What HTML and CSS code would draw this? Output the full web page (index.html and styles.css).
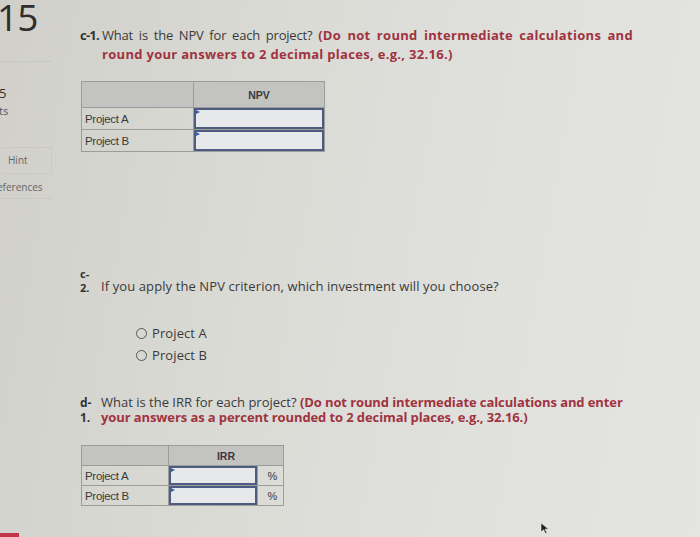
FILE: index.html
```html
<!DOCTYPE html>
<html>
<head>
<meta charset="utf-8">
<link rel="stylesheet" href="styles.css">
</head>
<body>
<div class="page">
  <aside class="side">
    <div class="qnum">15</div>
    <div class="pts"><div class="pts-n">5</div><div class="pts-l">ts</div></div>
    <div class="side-btn hint">Hint</div>
    <div class="side-btn refs">eferences</div>
  </aside>
  <main class="main">
    <section class="q q-c1">
      <div class="lbl">c-1.</div>
      <div class="txt">What is the NPV for each project? <b class="red">(Do not round intermediate calculations and round your answers to 2 decimal places, e.g., 32.16.)</b></div>
    </section>

    <table class="grid npv">
      <tr class="hd"><th class="c1"></th><th class="c2">NPV</th></tr>
      <tr><td class="c1">Project A</td><td class="in"><span class="box"></span></td></tr>
      <tr><td class="c1">Project B</td><td class="in"><span class="box"></span></td></tr>
    </table>

    <section class="q q-c2">
      <div class="lbl">c-<br>2.</div>
      <div class="txt">If you apply the NPV criterion, which investment will you choose?</div>
    </section>

    <div class="radios">
      <div class="opt"><span class="dot"></span>Project A</div>
      <div class="opt"><span class="dot"></span>Project B</div>
    </div>

    <section class="q q-d1">
      <div class="lbl">d-<br>1.</div>
      <div class="txt">What is the IRR for each project? <b class="red">(Do not round intermediate calculations and enter your answers as a percent rounded to 2 decimal places, e.g., 32.16.)</b></div>
    </section>

    <table class="grid irr">
      <tr class="hd"><th class="c1"></th><th class="c2" colspan="2">IRR</th></tr>
      <tr><td class="c1">Project A</td><td class="in"><span class="box"></span></td><td class="pct">%</td></tr>
      <tr><td class="c1">Project B</td><td class="in"><span class="box"></span></td><td class="pct">%</td></tr>
    </table>
  </main>
  <div class="redbar"></div>
  <svg class="cursor" width="10" height="12" viewBox="0 0 10 12"><path d="M1 1 L1 10 L3.5 7.8 L5.5 11.5 L7 10.8 L5 7.2 L8.5 7 Z" fill="#222" stroke="#eee" stroke-width="0.6"/></svg>
</div>
</body>
</html>
```

FILE: styles.css
```css
html, body {
  margin: 0;
  padding: 0;
}
body {
  width: 700px;
  height: 537px;
  overflow: hidden;
  font-family: "Open Sans", Lato, sans-serif;
  color: #3a3a3a;
}
.page {
  position: relative;
  display: flex;
  width: 700px;
  height: 537px;
  background: linear-gradient(100deg, #d0cfca 0%, #dadad5 35%, #e1e2de 75%, #e4e5e2 100%);
}
.side {
  width: 52px;
  flex: none;
  display: flex;
  flex-direction: column;
}
.qnum {
  font-family: "Open Sans", sans-serif;
  font-size: 37px;
  line-height: 40px;
  height: 64px;
  margin-left: -3px;
  margin-top: -3px;
  color: #2e2e2e;
  letter-spacing: -1px;
  border-bottom: 1px solid #c8c8c3;
}
.pts {
  padding-top: 23px;
  height: 62px;
  font-size: 11px;
  line-height: 17px;
  color: #555;
}
.pts-n { font-size: 13px; color: #333; margin-left: -1px; }
.pts-l { margin-left: -1px; }
.side-btn {
  font-size: 10px;
  color: #666;
  height: 26px;
  line-height: 24px;
  box-sizing: border-box;
  border-top: 1px solid #cac9c4;
  border-right: 1px solid #cac9c4;
}
.hint { padding-left: 8px; }
.refs { margin-left: -3px; border-bottom: 1px solid #cac9c4; border-right: none; line-height: 26px; }
.main {
  flex: 1;
  padding-left: 28px;
  padding-top: 26px;
}
.q {
  display: grid;
  grid-template-columns: 21px 1fr;
  align-items: end;
  font-size: 13px;
}
.lbl {
  font-weight: 700;
  color: #333;
  white-space: nowrap;
}
.txt { color: #3a3a3a; letter-spacing: 0.1px; }
.red { color: #a03340; font-weight: 700; letter-spacing: 0.3px; }
.q-c1 { line-height: 19px; grid-template-columns: 22px 1fr; }
.q-c1 .lbl { letter-spacing: -0.8px; align-self: start; }
.q-c1 .txt { width: 531px; text-align: justify; letter-spacing: -0.2px; }
.q-c2 { margin-top: 115px; line-height: 16px; }
.q-c2 .lbl { font-size: 11px; line-height: 14px; }
.q-c2 .txt { padding-bottom: 1px; }
.q-d1 { margin-top: 29px; line-height: 15px; }
.q-d1 .lbl { font-size: 12px; line-height: 15px; }
.q-d1 .txt { width: 530px; letter-spacing: 0; }
.q-d1 .red { letter-spacing: -0.1px; }
.grid {
  border-collapse: collapse;
  font-family: "Liberation Sans", Arial, sans-serif;
  font-size: 11.5px;
  color: #3a3a3a;
  margin-left: 1px;
}
.grid td, .grid th {
  border: 1px solid #9c9c9a;
  padding: 0;
}
.grid .hd th {
  background: #c3c3c1;
  font-size: 10.5px;
  font-weight: 700;
  text-align: center;
  color: #3a3a3a;
}
.grid td.c1 {
  padding-left: 3px;
  text-align: left;
  letter-spacing: -0.3px;
}
.grid td.in {
  position: relative;
  padding: 0;
}
.box {
  display: block;
  box-sizing: border-box;
  border: 2px solid #4d5c80;
  background: #e6e8ea;
  height: 100%;
}
.box::before {
  content: "";
  position: absolute;
  left: 2px;
  top: 2px;
  border-left: 4px solid #3b5aa8;
  border-top: 2.5px solid transparent;
  border-bottom: 2.5px solid transparent;
}
.npv { margin-top: 17px; width: 244px; }
.npv .hd th { height: 25px; }
.npv .c1 { width: 108px; }
.npv td { height: 20px; }
.npv .box { height: 21px; }
.irr { margin-top: 20px; width: 203px; }
.irr .hd th { height: 19px; }
.irr .c1 { width: 83px; }
.irr td.in { width: 88px; }
.irr td { height: 18px; }
.irr .box { height: 19px; }
.pct { text-align: center; padding-left: 4px !important; font-size: 11px; }
.radios {
  margin-top: 27px;
  padding-left: 56px;
  font-size: 13px;
  line-height: 22px;
  color: #3a3a3a;
  letter-spacing: 0.1px;
}
.opt {
  display: flex;
  align-items: center;
}
.dot {
  width: 9px;
  height: 9px;
  border: 1.2px solid #555;
  border-radius: 50%;
  margin-right: 5px;
  margin-top: 1px;
}
.redbar {
  position: absolute;
  left: 0;
  bottom: 0;
  width: 19px;
  height: 4px;
  background: #c2364a;
}
.cursor {
  position: absolute;
  left: 540px;
  top: 522px;
}
```
